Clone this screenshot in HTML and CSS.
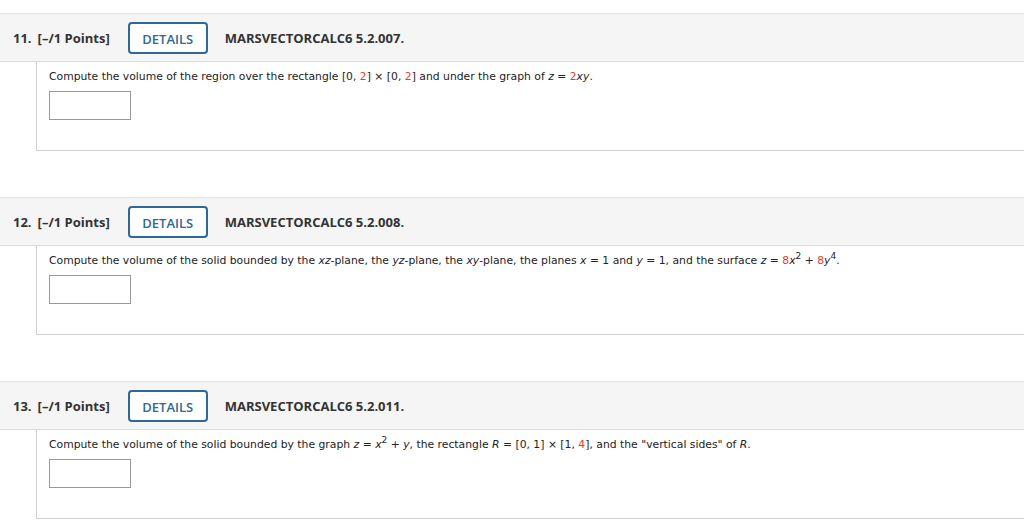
FILE: index.html
```html
<!DOCTYPE html>
<html lang="en">
<head>
    <meta charset="UTF-8">
    <meta name="viewport" content="width=device-width, initial-scale=1.0">
    <title>MARSVECTORCALC6 5.2</title>
    <link rel="stylesheet" href="styles.css">
</head>
<body>
    <div class="question">
        <div class="q-head">
            <span class="q-num">11.</span>
            <span class="q-points">[&ndash;/1 Points]</span>
            <button class="details">DETAILS</button>
            <span class="q-ref">MARSVECTORCALC6 5.2.007.</span>
        </div>
        <div class="q-body">
            <p>Compute the volume of the region over the rectangle [0, <span class="red">2</span>] &times; [0, <span class="red">2</span>] and under the graph of <i>z</i> = <span class="red">2</span><i>xy</i>.</p>
            <input type="text" class="answer">
        </div>
    </div>

    <div class="question">
        <div class="q-head">
            <span class="q-num">12.</span>
            <span class="q-points">[&ndash;/1 Points]</span>
            <button class="details">DETAILS</button>
            <span class="q-ref">MARSVECTORCALC6 5.2.008.</span>
        </div>
        <div class="q-body">
            <p>Compute the volume of the solid bounded by the <i>xz</i>-plane, the <i>yz</i>-plane, the <i>xy</i>-plane, the planes <i>x</i> = 1 and <i>y</i> = 1, and the surface <i>z</i> = <span class="red">8</span><i>x</i><sup>2</sup> + <span class="red">8</span><i>y</i><sup>4</sup>.</p>
            <input type="text" class="answer">
        </div>
    </div>

    <div class="question">
        <div class="q-head">
            <span class="q-num">13.</span>
            <span class="q-points">[&ndash;/1 Points]</span>
            <button class="details">DETAILS</button>
            <span class="q-ref">MARSVECTORCALC6 5.2.011.</span>
        </div>
        <div class="q-body">
            <p>Compute the volume of the solid bounded by the graph <i>z</i> = <i>x</i><sup>2</sup> + <i>y</i>, the rectangle <i>R</i> = [0, 1] &times; [1, <span class="red">4</span>], and the "vertical sides" of <i>R</i>.</p>
            <input type="text" class="answer">
        </div>
    </div>
</body>
</html>
```

FILE: styles.css
```css
body {
    margin: 0;
    padding-top: 13px;
    background: #fff;
    font-family: "DejaVu Sans", Verdana, sans-serif;
    color: #222;
}
.question {
    margin-bottom: 46px;
}
.question:last-child {
    margin-bottom: 0;
}
.q-head {
    display: flex;
    align-items: center;
    height: 47px;
    padding-left: 13px;
    background-color: #f5f5f5;
    border-top: 1px solid #e2e2e2;
    border-bottom: 1px solid #dcdcdc;
    font-family: "Open Sans", sans-serif;
    font-weight: bold;
    font-size: 13px;
    color: #333;
}
.q-num {
    margin-right: 6px;
}
.details {
    margin-left: 18px;
    margin-right: 17px;
    width: 80px;
    height: 32px;
    padding: 3px 0 0;
    background: #fff;
    border: 2px solid #2f6797;
    border-radius: 4px;
    color: #2f6797;
    font-family: "Open Sans", sans-serif;
    font-weight: 600;
    font-size: 13px;
    cursor: pointer;
}
.q-body {
    margin-left: 36px;
    padding: 8px 12px 30px;
    border-left: 1px solid #d0d0d0;
    border-bottom: 1px solid #d0d0d0;
}
.q-body p {
    margin: 0 0 7px;
    font-size: 10.8px;
    line-height: 14px;
}
.q-body i {
    font-style: italic;
}
.q-body sup {
    font-size: 9px;
    line-height: 0;
    vertical-align: 5px;
}
.red {
    color: #e8382c;
}
.answer {
    display: block;
    width: 82px;
    height: 29px;
    box-sizing: border-box;
    border: 1px solid #999;
    margin: 0;
}
```
